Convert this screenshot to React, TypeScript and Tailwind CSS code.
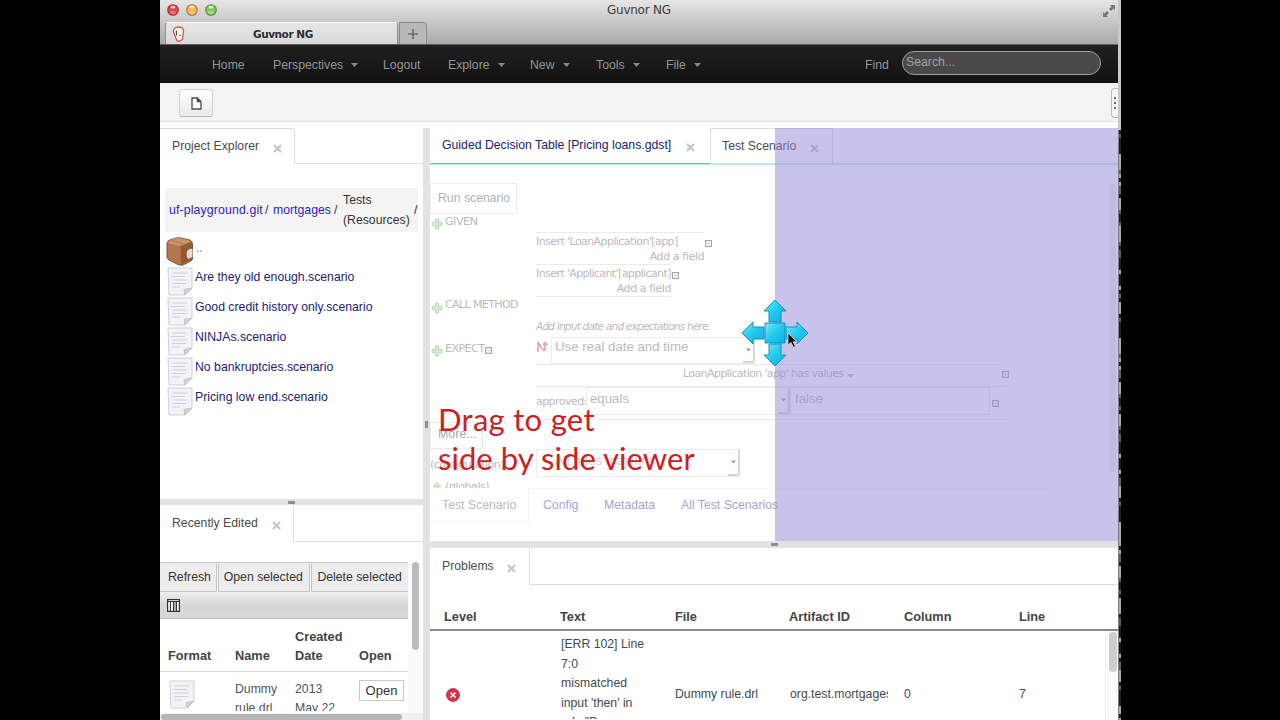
import React from "react";

const sans = "font-['Liberation_Sans',Arial,sans-serif]";
const tahoma = "font-['DejaVu_Sans',Verdana,sans-serif]";

function Light({ fill, ring }: { fill: string; ring: string }) {
  return (
    <svg width="12" height="12" viewBox="0 0 12 12" className="block">
      <circle cx="6" cy="6" r="5.3" fill={fill} stroke={ring} strokeWidth="1.1" />
      <ellipse cx="6" cy="3.2" rx="2.4" ry="1.4" fill="#fff" opacity="0.65" />
      <ellipse cx="6" cy="8.6" rx="3" ry="1.8" fill="#fff" opacity="0.25" />
    </svg>
  );
}

function Close({ className = "" }: { className?: string }) {
  return (
    <svg width="9" height="9" viewBox="0 0 9 9" className={`block shrink-0 ${className}`}>
      <path d="M1 1L8 8M8 1L1 8" stroke="#c3c3c3" strokeWidth="2" />
    </svg>
  );
}

function Doc() {
  return (
    <svg width="26" height="29" viewBox="0 0 26 29" className="block shrink-0">
      <path d="M1 1H25V21L18 28H2Z" fill="#f3f3f7" stroke="#cfcfd6" strokeWidth="1" />
      <path d="M5 6H20M4 9.500H18M5 13H20M5 16.500H19M5 20H13" stroke="#cfcfda" strokeWidth="1.1" />
      <path d="M25 21L17 22.500L18 28Z" fill="#d2d2da" stroke="#b9b9c2" strokeWidth="0.8" />
    </svg>
  );
}

function Box() {
  return (
    <svg width="27" height="29" viewBox="0 0 27 29" className="block shrink-0">
      <path d="M1 6Q1 4 4 3L10 1Q13 .5 16 1.200L24 3Q26.500 4 26.500 7V22Q26 23.500 24 24.500L17 28Q14 28.500 12 27.500L3 23Q1 22 1 20Z" fill="#b5764b" stroke="#7a4a2e" strokeWidth="0.9" />
      <path d="M1.500 6Q2 4 10 1.300Q13 .9 16 1.500L25 4Q20 7 14.500 9Q8 8 1.500 6Z" fill="#c99468" />
      <path d="M14.500 9L26 5V22.500L15 28Z" fill="#94592f" />
      <path d="M6.500 3L18.500 6.500L17 7.500L5 4Z" fill="#b98054" />
      <path d="M21 14Q24 11 26.500 12V20L22 22Q20 19 21 14Z" fill="#dedede" />
    </svg>
  );
}

function Plus({ className = "" }: { className?: string }) {
  return (
    <svg width="12" height="12" viewBox="0 0 12 12" className={`block shrink-0 ${className}`}>
      <path d="M4.500 1H7.500V4.500H11V7.500H7.500V11H4.500V7.500H1V4.500H4.500Z" fill="#d2ecd0" stroke="#b4d9b2" strokeWidth="0.9" />
    </svg>
  );
}

function Mini({ className = "", stroke = "#ababab" }: { className?: string; stroke?: string }) {
  return (
    <svg width="7" height="7" viewBox="0 0 7 7" className={`block shrink-0 ${className}`}>
      <rect x="0.600" y="0.600" width="5.800" height="5.800" fill="#fafafa" stroke={stroke} strokeWidth="1.200" />
      <path d="M2.500 3.500H4.500" stroke={stroke} strokeWidth="0.800" />
    </svg>
  );
}

function Caret({ className = "", fill = "#8b8b8b" }: { className?: string; fill?: string }) {
  return (
    <svg width="7" height="4" viewBox="0 0 7 4" className={`block shrink-0 ${className}`}>
      <path d="M0 0H7L3.500 4Z" fill={fill} />
    </svg>
  );
}

function SelectEnd() {
  return (
    <div className="flex h-full w-[12px] items-center justify-center rounded-br-[3px] border-r-2 border-b-2 border-[#d6d6d6] bg-[#fdfdfd]">
      <Caret className="w-[5px]" fill="#9a9a9a" />
    </div>
  );
}

const navItems: { label: string; width: string; caret: boolean }[] = [
  { label: "Home", width: "w-[61px]", caret: false },
  { label: "Perspectives", width: "w-[110px]", caret: true },
  { label: "Logout", width: "w-[65px]", caret: false },
  { label: "Explore", width: "w-[82px]", caret: true },
  { label: "New", width: "w-[66px]", caret: true },
  { label: "Tools", width: "w-[70px]", caret: true },
  { label: "File", width: "w-[60px]", caret: true },
];

function TitleBar() {
  return (
    <div className="flex h-[45px] shrink-0 flex-col border-b border-[#5f5f5f] bg-linear-to-b from-[#e6e6e6] to-[#a9a9a9]">
      <div className="flex h-[22px] items-center pb-[2px]">
        <div className="flex w-[440px] gap-[7px] pl-[7px]">
          <Light fill="#e0464c" ring="#a32f35" />
          <Light fill="#eeb54a" ring="#a87c2e" />
          <Light fill="#86c95f" ring="#578f3c" />
        </div>
        <div className={`${tahoma} w-[80px] pl-[7px] text-[12px] leading-[20px] tracking-[-0.25px] whitespace-nowrap text-[#3c3c3c]`}>Guvnor NG</div>
        <svg width="14" height="14" viewBox="0 0 14 14" className="mt-[2px] ml-[422px] block">
          <path d="M8 1H13V6L11.500 4.500L9 7L7 5L9.500 2.500ZM6 13H1V8L2.500 9.500L5 7L7 9L4.500 11.500Z" fill="#777" />
        </svg>
      </div>
      <div className="flex h-[22px]">
        <div className="ml-[5px] flex w-[233px] items-center rounded-t-[3px] border-t border-r border-l border-[#8f8f8f] border-t-[#f4f4f4] bg-linear-to-b from-[#e6e6e6] to-[#d9d9d9]">
          <svg width="13" height="16" viewBox="0 0 13 16" className="ml-[6px] block">
            <path d="M6.500 1C2.500 1 1 3.500 1.500 6L2.500 8.500L5 15Q8 16 10.500 13L11.500 6Q12 1 6.500 1Z" fill="#f7f2ef" stroke="#cf5a4c" strokeWidth="1.3" />
            <path d="M4.500 4.500V9.500" stroke="#55585f" strokeWidth="1.2" />
            <path d="M7 9.500H9.500" stroke="#e0784a" strokeWidth="1.200" />
          </svg>
          <div className={`${tahoma} mt-[2px] ml-[68px] text-[10.500px] font-bold tracking-[-0.45px] whitespace-nowrap text-[#2c2c2c]`}>Guvnor NG</div>
        </div>
        <div className="ml-[1px] flex w-[28px] items-center justify-center rounded-tr-[4px] border-t border-r border-l border-[#8b8b8b] bg-[#b9b9b9]">
          <svg width="10" height="10" viewBox="0 0 10 10">
            <path d="M5 0V10M0 5H10" stroke="#6a6a6a" strokeWidth="1.600" />
          </svg>
        </div>
      </div>
    </div>
  );
}

function NavBar() {
  return (
    <div className="flex h-[38px] shrink-0 items-center bg-linear-to-b from-[#202020] to-[#121212] pt-[2px] pl-[52px] text-[12.250px] text-[#969696]">
      {navItems.map((n) => (
        <div key={n.label} className={`flex shrink-0 items-center whitespace-nowrap ${n.width}`}>
          <span>{n.label}</span>
          {n.caret && <Caret className="ml-[8px]" />}
        </div>
      ))}
      <div className="ml-[139px] w-[37px]">Find</div>
      <div className="mb-[5px] flex h-[24px] w-[199px] items-center rounded-full border border-[#9d9d9d] bg-[#494949] pl-[3px] text-[#a2a2a2]">
        Search...
      </div>
    </div>
  );
}

function ToolBar() {
  return (
    <div className="flex h-[39px] shrink-0 items-center justify-between border-b border-[#e0e0e0] bg-[#f3f3f3] pt-[2px] pl-[19px]">
      <div className="flex h-[28px] w-[34px] items-center justify-center rounded-[3px] border border-[#cfcfcf] border-b-[#b5b5b5] bg-linear-to-b from-white to-[#e9e9e9]">
        <svg width="11" height="13" viewBox="0 0 11 13">
          <path d="M1 1H6.500L10 4.500V12H1Z" fill="#fff" stroke="#4d4d4d" strokeWidth="1.300" />
          <path d="M6 1V5H10Z" fill="#4d4d4d" stroke="#4d4d4d" strokeWidth="0.600" />
        </svg>
      </div>
      <div className="flex h-[30px] w-[7px] flex-col items-center justify-center gap-[3px] rounded-l-[4px] border border-r-0 border-[#b9b9b9] bg-[#f6f6f6]">
        <i className="size-[2px] bg-[#6a6a6a]" />
        <i className="size-[2px] bg-[#6a6a6a]" />
        <i className="size-[2px] bg-[#6a6a6a]" />
      </div>
    </div>
  );
}

const files = [
  "Are they old enough.scenario",
  "Good credit history only.scenario",
  "NINJAs.scenario",
  "No bankruptcies.scenario",
  "Pricing low end.scenario",
];

function LeftColumn() {
  return (
    <div className="flex w-[263px] shrink-0 flex-col bg-white">
      <section className="flex h-[371px] shrink-0 flex-col">
        <div className="flex h-[36px]">
          <div className="flex w-[135px] items-center rounded-tr-[4px] border-t border-r border-[#dedede] pl-[12px] text-[12.250px] whitespace-nowrap text-[#4b4b4b]">
            <span className="w-[101px] shrink-0">Project Explorer</span>
            <Close className="mt-[3px]" />
          </div>
          <div className="flex-1 border-b border-[#dedede]" />
        </div>
        <div className="mt-[24px] ml-[5px] flex h-[44px] w-[253px] items-center bg-[#f4f4f4] pl-[4px] text-[12.250px] whitespace-nowrap text-[#333]">
          <span className="w-[96px] shrink-0 tracking-[0.150px] text-[#2a22c4]">uf-playground.git</span>
          <span className="w-[8px] shrink-0">/</span>
          <span className="w-[61px] shrink-0 text-[#2a22c4]">mortgages</span>
          <span className="w-[9px] shrink-0">/</span>
          <span className="w-[71px] shrink-0 leading-[20px]">
            Tests
            <br />
            (Resources)
          </span>
          <span>/</span>
        </div>
        <div className="mt-[5px] ml-[6px] flex h-[30px] items-start gap-[3px]">
          <Box />
          <span className="text-[12px] leading-[22px] text-[#777]">..</span>
        </div>
        {files.map((f) => (
          <div key={f} className="ml-[7px] flex h-[30px] items-start gap-[2px]">
            <Doc />
            <span className="text-[12.250px] leading-[21px] whitespace-nowrap text-[#221c74]">{f}</span>
          </div>
        ))}
      </section>
      <div className="flex h-[6px] shrink-0 items-center justify-center bg-[#e2e2e2]">
        <i className="h-[3px] w-[7px] bg-[#8e8e8e]" />
      </div>
      <section className="flex h-[215px] flex-col overflow-hidden">
        <div className="flex h-[37px] shrink-0">
          <div className="flex w-[134px] items-center border-r border-[#dedede] pl-[12px] text-[12.250px] whitespace-nowrap text-[#4b4b4b]">
            <span className="w-[100px] shrink-0">Recently Edited</span>
            <Close className="mt-[4px]" />
          </div>
          <div className="flex-1 border-b border-[#dedede]" />
        </div>
        <div className="mt-[20px] flex h-[151px] shrink-0">
          <div className="flex w-[248px] flex-col overflow-hidden">
            <div className="flex h-[30px] shrink-0 text-[12.250px] whitespace-nowrap text-[#333]">
              <div className="flex w-[57px] items-center border-t border-r border-b border-[#c4c4c4] bg-[#ededed] pl-[8px]">Refresh</div>
              <div className="ml-[1px] flex w-[93px] items-center border border-[#c4c4c4] bg-[#ededed] pl-[5px]">Open selected</div>
              <div className="ml-[1px] flex w-[97px] items-center border-t border-b border-l border-[#c4c4c4] bg-[#ededed] pl-[5px]">Delete selected</div>
            </div>
            <div className="flex h-[27px] shrink-0 items-center border-b border-[#bdbdbd] bg-linear-to-b from-[#efefef] via-[#d5d5d5] to-[#d9d9d9] pl-[7px]">
              <svg width="13" height="13" viewBox="0 0 13 13">
                <rect x="0.600" y="0.600" width="11.800" height="11.800" fill="#f8f8f8" stroke="#333" strokeWidth="1.200" />
                <rect x="6" y="3" width="3" height="9" fill="#a9a9a9" />
                <path d="M0 2.500H13M3.500 2V13M6.500 2V13M9.500 2V13" stroke="#333" strokeWidth="1" />
              </svg>
            </div>
            <div className="grid h-[53px] shrink-0 grid-cols-[67px_60px_64px_49px] items-end border-b border-[#dedede] pb-[6px] pl-[8px] text-[12.750px] leading-[19px] font-bold text-[#444]">
              <div>Format</div>
              <div>Name</div>
              <div>Created Date</div>
              <div>Open</div>
            </div>
            <div className="grid h-[39px] grid-cols-[67px_60px_64px_49px] overflow-hidden pt-[8px] pl-[8px] text-[12.250px] leading-[19px] text-[#555]">
              <div className="pl-[1px]">
                <Doc />
              </div>
              <div>
                Dummy
                <br />
                rule.drl
              </div>
              <div>
                2013
                <br />
                May 22
              </div>
              <div className="flex h-[21px] w-[45px] items-center justify-center border border-[#c9c9c9] bg-white text-[13px] text-[#333]">Open</div>
            </div>
          </div>
          <div className="flex w-[15px] justify-center bg-[#fafafa]">
            <div className="h-[88px] w-[7px] rounded-full bg-[#bcbcbc]" />
          </div>
        </div>
        <div className="flex h-[7px] shrink-0 items-end bg-[#f0f0f0]">
          <div className="ml-[1px] h-[6px] w-[241px] rounded-full bg-[#b5b5b5]" />
        </div>
      </section>
    </div>
  );
}

function ScenarioForm() {
  return (
    <div className={`${tahoma} flex h-[323px] shrink-0 flex-col overflow-hidden text-[11px] tracking-[-0.4px] whitespace-nowrap text-[#bababa]`}>
      <div className={`${sans} mt-[18px] flex h-[31px] w-[87px] shrink-0 items-center border border-[#ececec] pl-[7px] text-[12.250px] tracking-normal text-[#b0b0b0]`}>
        Run scenario
      </div>
      <div className="flex h-[84px] shrink-0">
        <div className="flex w-[106px] items-start">
          <Plus className="mt-[4px] ml-[1px]" />
          <span className="ml-[2px] leading-[15px]">GIVEN</span>
        </div>
        <div className="flex flex-col pt-[18px]">
          <div className="flex h-[32px]">
            <div className="w-[168px] border-t border-[#ebebeb] pt-[1px] leading-[15px]">
              <div className="tracking-[-0.570px]">Insert 'LoanApplication'[app]</div>
              <div className="text-right">Add a field</div>
            </div>
            <Mini className="mt-[8px] ml-[1px]" />
          </div>
          <div className="flex h-[33px]">
            <div className="w-[135px] border-y border-[#ebebeb] pt-[1px] leading-[15px]">
              <div className="tracking-[-0.600px]">Insert 'Applicant'[applicant]</div>
              <div className="text-right">Add a field</div>
            </div>
            <Mini className="mt-[8px] ml-[1px]" />
          </div>
        </div>
      </div>
      <div className="flex h-[22px] shrink-0">
        <Plus className="mt-[4px] ml-[1px]" />
        <span className="ml-[2px] leading-[14px] tracking-[-0.600px]">CALL METHOD</span>
      </div>
      <div className="ml-[106px] h-[17px] shrink-0 text-[10.500px] leading-[13px] tracking-[-0.760px] italic">Add input date and expectations here.</div>
      <div className="flex h-[27px] shrink-0">
        <div className="flex w-[106px]">
          <Plus className="mt-[8px] ml-[1px]" />
          <span className="ml-[2px] w-[38px] leading-[24px] tracking-[-0.500px]">EXPECT</span>
          <Mini className="mt-[10px] ml-[2px]" />
        </div>
        <svg width="15" height="14" viewBox="0 0 15 14" className="mt-[3px] block">
          <path d="M2 12V3L8 11M9 11V3L7 5M9 3L12 5" stroke="#e3aab6" strokeWidth="1.800" fill="none" />
          <path d="M2 2L5 6" stroke="#b4b4c8" strokeWidth="1.200" />
        </svg>
        <div className={`${sans} flex w-[204px] items-start justify-between border border-r-0 border-[#ececec] pl-[3px] text-[13.250px] leading-[18px] tracking-normal`}>
          <span>Use real date and time</span>
          <SelectEnd />
        </div>
      </div>
      <div className="ml-[106px] flex h-[22px] shrink-0">
        <div className="flex w-[464px] border-t border-[#ebebeb] pl-[147px] leading-[17px] tracking-[-0.620px]">
          LoanApplication 'app' has values
          <Caret className="mt-[9px] ml-[4px]" fill="#bdbdbd" />
        </div>
        <Mini className="mt-[7px] ml-[2px]" />
      </div>
      <div className="ml-[106px] flex h-[34px] w-[470px] shrink-0 border-y border-[#ebebeb]">
        <div className="w-[50px] leading-[30px] tracking-[-0.550px]">approved:</div>
        <div className={`${sans} flex h-[28px] w-[204px] items-start justify-between border border-r-0 border-[#ececec] pl-[3px] text-[13.250px] leading-[21px] tracking-normal`}>
          <span>equals</span>
          <SelectEnd />
        </div>
        <div className={`${sans} h-[28px] w-[200px] border border-[#ebebeb] pl-[4px] text-[13.250px] leading-[21px] tracking-normal`}>false</div>
        <Mini className="mt-[13px] ml-[2px]" />
      </div>
      <div className={`${sans} mt-[2px] flex h-[27px] w-[53px] shrink-0 items-center border border-[#ebebeb] pb-[2px] pl-[7px] text-[12.250px] tracking-[0.150px] text-[#a8a8a8]`}>More...</div>
      <div className="flex h-[28px] shrink-0">
        <div className="w-[106px] leading-[32px] tracking-[-0.500px]">(configuration)</div>
        <div className={`${sans} flex w-[204px] items-start justify-between border border-r-0 border-[#ececec] pl-[18px] text-[13.250px] leading-[22px] tracking-normal text-[#d0d0d0]`}>
          <span>All rules may fire</span>
          <SelectEnd />
        </div>
      </div>
      <div className="flex h-[12px] shrink-0 items-start overflow-hidden leading-[19px]">
        <Plus className="mt-[5px] ml-[3px] size-[8px]" />
        <span className="ml-[4px]">(globals)</span>
      </div>
    </div>
  );
}

function DropCompass() {
  return (
    <svg width="68" height="68" viewBox="0 0 68 68" className="absolute top-[171px] left-[311px]">
      <defs>
        <linearGradient id="cy" x1="0" y1="0" x2="1" y2="1">
          <stop offset="0" stopColor="#7fe9fb" />
          <stop offset="0.500" stopColor="#1fcbf0" />
          <stop offset="1" stopColor="#12a9e0" />
        </linearGradient>
      </defs>
      <g fill="url(#cy)" stroke="#1a8fba" strokeWidth="1" strokeLinejoin="round">
        <path d="M34 1L45 12H40V23H28V12H23Z" />
        <path d="M34 67L45 56H40V45H28V56H23Z" />
        <path d="M1 34L12 23V28H23V40H12V45Z" />
        <path d="M67 34L56 23V28H45V40H56V45Z" />
        <rect x="24" y="24" width="20" height="20" />
      </g>
    </svg>
  );
}

function Editor() {
  return (
    <section className="relative flex h-[413px] shrink-0 flex-col overflow-hidden">
      <div className="flex h-[37px] shrink-0 border-b-2 border-[#bdeafa] text-[12.250px] whitespace-nowrap">
        <div className="-mb-[1px] flex w-[280px] items-center border-b border-[#77aebf] pl-[12px] text-[#221c74]">
          <span className="w-[244px] shrink-0">Guided Decision Table [Pricing loans.gdst]</span>
          <Close className="mt-[4px]" />
        </div>
        <div className="flex w-[123px] items-center border-t border-r border-l border-[#dedede] pl-[11px] text-[#4b4b4b]">
          <span className="w-[88px] shrink-0">Test Scenario</span>
          <Close className="mt-[4px]" />
        </div>
      </div>
      <ScenarioForm />
      <div className="flex h-[34px] w-[620px] shrink-0 text-[12.250px] leading-[34px] whitespace-nowrap text-[#a9a3d3]">
        <div className="w-[99px] border-r border-b border-[#f3f3f3] pl-[12px] text-[#b9b9b9]">Test Scenario</div>
        <div className="flex flex-1 border-t border-[#f6f6f6] pl-[14px] leading-[33px]">
          <span className="w-[61px]">Config</span>
          <span className="w-[77px]">Metadata</span>
          <span>All Test Scenarios</span>
        </div>
      </div>
      <div className="absolute top-0 right-0 h-[413px] w-[343px] bg-[rgb(148,135,215)]/50">
        <div className="absolute top-[56px] right-[2px] h-[288px] w-[7px] rounded-full bg-[#bcb5de]/60" />
      </div>
      <DropCompass />
      <svg width="12" height="17" viewBox="0 0 12 17" className="absolute top-[204px] left-[357px]">
        <path d="M1 1V13L4 10.500L6.500 15.500L8.500 14.500L6.200 9.800H10Z" fill="#111" stroke="#ddd" strokeWidth="0.800" />
      </svg>
      <div className="absolute top-[272px] left-[8px] font-['Lato',sans-serif] text-[31px] leading-[39px] whitespace-nowrap text-[#cf2020]">
        <div className="tracking-[0.300px]">Drag to get</div>
        <div className="tracking-[0.050px]">side by side viewer</div>
      </div>
    </section>
  );
}

const cols = "grid grid-cols-[115px_115px_114px_115px_115px_80px]";

function Problems() {
  return (
    <section className="flex h-[171px] flex-col overflow-hidden bg-white">
      <div className="flex h-[37px] shrink-0">
        <div className="flex w-[100px] items-center border-r border-[#dedede] pl-[12px] text-[12.250px] text-[#4b4b4b]">
          <span className="w-[65px] shrink-0">Problems</span>
          <Close className="mt-[4px]" />
        </div>
        <div className="flex-1 border-b border-[#dedede]" />
      </div>
      <div className={`${cols} h-[46px] shrink-0 items-end border-b-2 border-[#888] pb-[2px] pl-[15px] text-[12.750px] leading-[20px] font-bold whitespace-nowrap text-[#444]`}>
        <div className="-ml-px">Level</div>
        <div>Text</div>
        <div>File</div>
        <div>Artifact ID</div>
        <div>Column</div>
        <div>Line</div>
      </div>
      <div className="flex">
        <div className={`${cols} w-[675px] shrink-0 pt-[4px] pl-[15px] text-[12.250px] leading-[19.600px] text-[#484848]`}>
          <div className="pt-[53px] pl-[1px]">
            <svg width="14" height="14" viewBox="0 0 14 14">
              <circle cx="7" cy="7" r="6.500" fill="#d9304d" stroke="#b8243d" strokeWidth="0.800" />
              <path d="M4.500 4.500L9.500 9.500M9.500 4.500L4.500 9.500" stroke="#fff" strokeWidth="1.500" />
            </svg>
          </div>
          <div className="pl-px whitespace-nowrap">
            [ERR 102] Line
            <br />
            7:0
            <br />
            mismatched
            <br />
            input 'then' in
            <br />
            rule "Dummy
          </div>
          <div className="pt-[50px] whitespace-nowrap">Dummy rule.drl</div>
          <div className="mt-[50px] ml-px h-[20px] w-[98px] overflow-hidden whitespace-nowrap">org.test.mortgages</div>
          <div className="pt-[50px]">0</div>
          <div className="pt-[50px]">7</div>
        </div>
        <div className="h-[90px] w-[13px] border-l border-[#ececec] bg-[#fafafa] pl-[3px]">
          <div className="mt-px h-[40px] w-[8px] rounded-full bg-[#cdcdcd]" />
        </div>
      </div>
    </section>
  );
}

const specks = Array.from({ length: 150 }, (_, i) => ((i * 37 + ((i * i) % 23) * 11) % 100) / 100);

export default function App() {
  return (
    <div className={`${sans} flex h-[720px] w-[1280px] overflow-hidden bg-black pl-[160px]`}>
      <div className="flex w-[958px] shrink-0 flex-col bg-white">
        <TitleBar />
        <NavBar />
        <ToolBar />
        <div className="mt-[6px] flex h-[592px] border-l border-[#c4c4c4]">
          <div className="-ml-px flex">
            <LeftColumn />
            <div className="flex w-[7px] shrink-0 items-center justify-center bg-[#e2e2e2]">
              <i className="h-[7px] w-[3px] bg-[#8e8e8e]" />
            </div>
            <div className="flex w-[688px] shrink-0 flex-col">
              <Editor />
              <div className="flex h-[7px] shrink-0 items-center justify-center bg-[#e2e2e2]">
                <i className="h-[3px] w-[7px] bg-[#8e8e8e]" />
              </div>
              <Problems />
            </div>
          </div>
        </div>
      </div>
      <svg width="3" height="720" viewBox="0 0 3 720" className="block shrink-0">
        <rect width="3" height="130" fill="#c9c9c9" />
        <rect y="130" width="3" height="590" fill="#7d7d7d" />
        {specks.map((s, i) => (
          <rect key={i} x={1} y={130 + i * 4} width="2" height="4" fill={s > 0.6 ? "#a9a9a9" : s > 0.3 ? "#5c5c5c" : "#1e1e1e"} />
        ))}
      </svg>
    </div>
  );
}
